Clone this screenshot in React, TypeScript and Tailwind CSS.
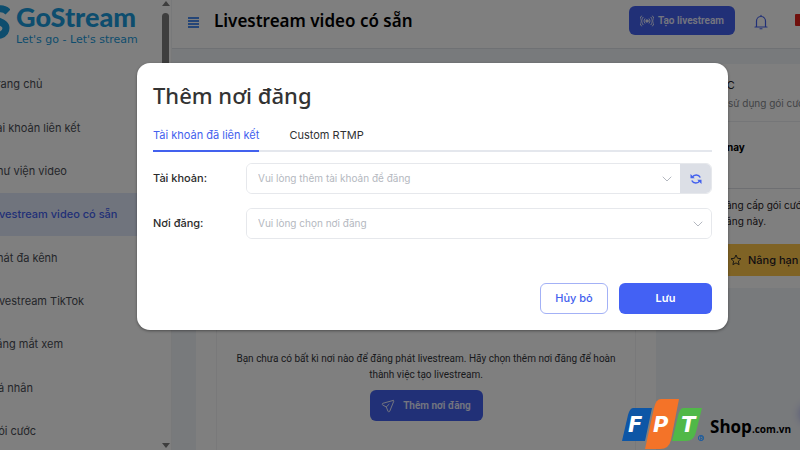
import { ReactNode } from "react";

const menu = [
  "Trang chủ",
  "Tài khoản liên kết",
  "Thư viện video",
  "Livestream video có sẵn",
  "Phát đa kênh",
  "Livestream TikTok",
  "Tăng mắt xem",
  "Cá nhân",
  "Gói cước",
];

function Broadcast() {
  return (
    <svg className="h-3.5 w-3.5" viewBox="0 0 28 28" fill="none" stroke="currentColor" strokeWidth="2" strokeLinecap="round">
      <circle cx="14" cy="14" r="2.4" fill="currentColor" />
      <path d="M9.6 9.6a6.5 6.5 0 0 0 0 8.8M18.4 9.6a6.5 6.5 0 0 1 0 8.8M6 6.5a11 11 0 0 0 0 15M22 6.5a11 11 0 0 1 0 15M2.8 4a15 15 0 0 0 0 20M25.2 4a15 15 0 0 1 0 20" />
    </svg>
  );
}

function Bell() {
  return (
    <svg className="h-4 w-4" viewBox="0 0 32 32" fill="none" stroke="currentColor" strokeWidth="2.4" strokeLinecap="round" strokeLinejoin="round">
      <path d="M16 5V2.5M4 26h24M7 26V14a9 9 0 0 1 18 0V26M14 29.5h4" />
    </svg>
  );
}

function Plane() {
  return (
    <svg className="h-3.5 w-3.5" viewBox="0 0 28 28" fill="none" stroke="currentColor" strokeWidth="2" strokeLinejoin="round" strokeLinecap="round">
      <path d="M24 3 4 8.5c-2 .6-2.200 2.600-.5 3.500l7 4 3.500 8.500c.8 1.700 2.900 1.600 3.500-.2L25.500 4.500c.3-1-.5-1.800-1.500-1.500ZM10.500 16l5.600-5.500" />
    </svg>
  );
}

function Refresh() {
  return (
    <svg className="h-3 w-3" viewBox="0 0 24 24" fill="none" stroke="currentColor" strokeWidth="3">
      <path d="M4.500 8.500A9 9 0 0 1 20.500 9M19.500 15.500A9 9 0 0 1 3.500 15" />
      <path d="M1 2v8.500h8.500ZM23 22v-8.500h-8.500Z" fill="currentColor" stroke="none" />
    </svg>
  );
}

function Star() {
  return (
    <svg className="h-3 w-3" viewBox="0 0 24 24" fill="none" stroke="currentColor" strokeWidth="1.800" strokeLinejoin="round">
      <path d="m12 2 3 6.500 7 .9-5.200 4.900 1.400 7L12 17.800l-6.200 3.500 1.400-7L2 9.400l7-.9Z" />
    </svg>
  );
}

function Chevron() {
  return (
    <svg className="pointer-events-none absolute top-1/2 right-2 h-2.5 w-2.5 -translate-y-1/2 text-[#b4b8c0]" viewBox="0 0 20 20" fill="none" stroke="currentColor" strokeWidth="2" strokeLinecap="round" strokeLinejoin="round">
      <path d="m2 6 8 8 8-8" />
    </svg>
  );
}

function Field({ id, label, placeholder, action }: { id: string; label: string; placeholder: string; action?: ReactNode }) {
  return (
    <div className="flex items-center">
      <label htmlFor={id} className="w-[93px] shrink-0 text-[11px] font-medium text-[#2b2b2b]">
        {label}
      </label>
      <div className="flex h-[31px] min-w-0 flex-1 overflow-hidden rounded-md border border-[#e6e8ec]">
        <div className="relative flex-1">
          <select id={id} className="h-full w-full appearance-none bg-white px-[11px] text-[10px] text-[#b4b8c0] outline-none">
            <option>{placeholder}</option>
          </select>
          <Chevron />
        </div>
        {action}
      </div>
    </div>
  );
}

function Sidebar() {
  return (
    <aside className="flex w-[172px] shrink-0 overflow-hidden border-r border-[#f0f2f5] bg-white">
      <div className="min-w-0 flex-1 overflow-hidden">
        <div className="flex h-[63px] gap-[6px]">
          <svg className="mt-1 -ml-3 h-10 w-[22px] shrink-0" viewBox="0 0 22 40" fill="none" stroke="#1a9bdc" strokeWidth="7">
            <path d="M20 8C15 3 5 4 5 11s13 6 13 13-8 9-17 7" />
          </svg>
          <div className="whitespace-nowrap text-[#1a9bdc]">
            <div className="font-[Lato,sans-serif] text-[27px] leading-[34px] font-black">GoStream</div>
            <div className="font-['DejaVu_Sans',sans-serif] text-[11px] leading-none">Let's go - Let's stream</div>
          </div>
        </div>
        <nav className="grid h-[390px] auto-rows-fr">
          {menu.map((item) => (
            <a
              key={item}
              href="#"
              className={
                item === "Livestream video có sẵn"
                  ? "flex items-center bg-[#e1e8fb] text-[11px] font-medium whitespace-nowrap text-[#4361ee]"
                  : "flex items-center text-[11px] whitespace-nowrap text-[#4a4d55]"
              }
            >
              <span className="-ml-2.5">{item}</span>
            </a>
          ))}
        </nav>
      </div>
      <div className="flex w-[11px] shrink-0 flex-col items-center justify-between py-[1px]">
        <div className="flex flex-col items-center gap-[7px]">
          <svg className="h-[5px] w-2" viewBox="0 0 8 5"><path d="M4 0 8 5H0Z" fill="#7c7c7c" /></svg>
          <div className="h-[240px] w-[7px] rounded-full bg-[#7c7c7c]" />
        </div>
        <svg className="mb-[1px] h-[5px] w-2" viewBox="0 0 8 5"><path d="M0 0h8L4 5Z" fill="#7c7c7c" /></svg>
      </div>
    </aside>
  );
}

function Header() {
  return (
    <header className="flex h-[49px] shrink-0 items-start border-b border-[#dfe3e9] bg-white pl-4">
      <button aria-label="Menu" className="mt-[17px] flex w-[11px] flex-col gap-[1px]">
        <span className="h-[2px] w-full bg-[#4a8df0]" />
        <span className="h-[2px] w-full bg-[#4a8df0]" />
        <span className="h-[2px] w-full bg-[#4a8df0]" />
        <span className="h-[2px] w-full bg-[#4a8df0]" />
      </button>
      <h1 className="ml-[15px] flex-1 pt-[7px] font-['Noto_Sans',sans-serif] text-[17px] leading-7 font-semibold whitespace-nowrap text-black">
        Livestream video có sẵn
      </h1>
      <button className="mt-[6px] flex h-[29px] w-[106px] items-center justify-center gap-1 rounded-md bg-[#4361ee] font-[Roboto,sans-serif] text-[10px] font-semibold whitespace-nowrap text-[#e8ebff]">
        <Broadcast />
        Tạo livestream
      </button>
      <button aria-label="Thông báo" className="mt-[14px] ml-[18px] text-[#4361ee]">
        <Bell />
      </button>
      <div className="mt-[14px] ml-[26px] h-3 w-[5px] rounded-l-[1px] bg-[#e0201b]" />
    </header>
  );
}

function FptLogo() {
  return (
    <div className="absolute right-[9px] bottom-0 flex items-end">
      <svg className="h-[52px] w-[88px]" viewBox="0 0 88 52">
        <path d="M11 10H30L23 43H0L6 17Q8 10 11 10Z" fill="#0d56a6" />
        <path d="M39 1H57L49 42Q47 51 38 51H23L32 10Q34 1 39 1Z" fill="#f47328" />
        <path d="M61 10H80L74 34Q72 43 64 43H50L56 18Q58 10 61 10Z" fill="#50b848" />
        <g fill="white" fontFamily="'DejaVu Sans', sans-serif" fontWeight="bold" fontStyle="italic" fontSize="21">
          <text x="6" y="34">F</text>
          <text x="31" y="34">P</text>
          <text x="59" y="34">T</text>
        </g>
        <circle cx="79" cy="40" r="2.700" fill="none" stroke="#0d56a6" strokeWidth="0.800" />
        <text x="77.500" y="42" fontSize="4.500" fontWeight="bold" fontFamily="'Liberation Sans', sans-serif" fill="#0d56a6">R</text>
      </svg>
      <div className="mb-[10px] flex items-baseline font-['Open_Sans',sans-serif] leading-[22px] font-bold text-black">
        <span className="text-[17px]">Shop</span>
        <span className="text-[10px]">.com.vn</span>
      </div>
    </div>
  );
}

export default function App() {
  return (
    <div className="relative flex h-screen overflow-hidden bg-[#f1f4f9] font-[Inter,sans-serif]">
      <Sidebar />
      <div className="flex min-w-0 flex-1 flex-col">
        <Header />
        <div className="flex min-h-0 flex-1 gap-5 pt-[15px] pl-6">
          <main className="flex min-w-0 flex-1 bg-white px-5">
            <section className="flex flex-1 flex-col items-center justify-end border-x border-[#f2f3f5] pb-[29px]">
              <p className="max-w-[384px] text-center font-[Roboto,sans-serif] text-[10px] leading-4 text-[#33353a]">
                Bạn chưa có bất kì nơi nào để đăng phát livestream. Hãy chọn thêm nơi đăng để hoàn thành việc tạo livestream.
              </p>
              <button className="mt-[7px] flex h-[31px] w-[113px] items-center justify-center gap-2 rounded-md bg-[#4361ee] font-[Roboto,sans-serif] text-[10px] font-semibold text-[#e8ebff]">
                <Plane />
                Thêm nơi đăng
              </button>
            </section>
          </main>
          <aside className="flex w-[124px] shrink-0 flex-col">
            <div className="overflow-hidden bg-white whitespace-nowrap text-[#1f2024]">
              <div className="border-b border-[#ebedf0] pt-3 pb-[9px] pl-[44px]">
                <div className="text-[11px] leading-[18px]">TC</div>
                <div className="pl-2 text-[10px] leading-[18px] text-[#85878d]">sử dụng gói cước</div>
              </div>
              <div className="h-[67px] border-b border-[#dcdfe4] pt-[16px] pl-[51px] text-[10px] leading-[18px] font-bold text-black">nay</div>
              <div className="pt-2 pl-[44px] text-[10px] leading-4">
                <p>nâng cấp gói cước</p>
                <p>đăng này.</p>
              </div>
              <button className="mt-[15px] mb-3 flex h-8 w-full items-center gap-[6px] bg-[#ffc64a] pl-[54px] text-[11px] font-medium">
                <Star />
                Nâng hạn
              </button>
            </div>
          </aside>
        </div>
      </div>

      <div className="absolute right-[-17px] bottom-7 h-4 w-4 rounded-full bg-[#4361ee] shadow-[0_0_8px_2px_#b0b5f2]" />

      <div className="absolute inset-0 bg-black/50 pt-[63px] pr-[72px] pl-[137px]">
        <div role="dialog" aria-labelledby="dialog-title" className="rounded-[13px] bg-white px-4 pt-4 pb-4 shadow-[0_1px_3px_rgba(0,0,0,0.4)]">
          <h2 id="dialog-title" className="font-['Noto_Sans',sans-serif] text-[22px] leading-8 font-medium text-[#333333]">
            Thêm nơi đăng
          </h2>
          <div role="tablist" className="mt-[10px] flex h-[31px] gap-[30px] border-b-2 border-[#e4e7ed] text-[11px]">
            <button role="tab" aria-selected="true" className="-mb-[2px] border-b-2 border-[#4361ee] text-[#4361ee]">
              Tài khoản đã liên kết
            </button>
            <button role="tab" aria-selected="false" className="text-[#303133]">
              Custom RTMP
            </button>
          </div>
          <form className="mt-[11px]">
            <div className="flex flex-col gap-[14px]">
              <Field
                id="account"
                label="Tài khoản:"
                placeholder="Vui lòng thêm tài khoản để đăng"
                action={
                  <button type="button" aria-label="Làm mới" className="flex w-[31px] items-center justify-center bg-[#dcdfe6] text-[#4361ee]">
                    <Refresh />
                  </button>
                }
              />
              <Field id="place" label="Nơi đăng:" placeholder="Vui lòng chọn nơi đăng" />
            </div>
            <div className="mt-[44px] flex justify-end gap-[11px]">
              <button type="button" className="h-[31px] w-[68px] rounded-md border border-[#a3b1f6] text-[11px] font-medium text-[#4361ee]">
                Hủy bỏ
              </button>
              <button type="button" className="h-[31px] w-[93px] rounded-md bg-[#4361f4] text-[11px] font-semibold text-white">
                Lưu
              </button>
            </div>
          </form>
        </div>
      </div>

      <FptLogo />
    </div>
  );
}
